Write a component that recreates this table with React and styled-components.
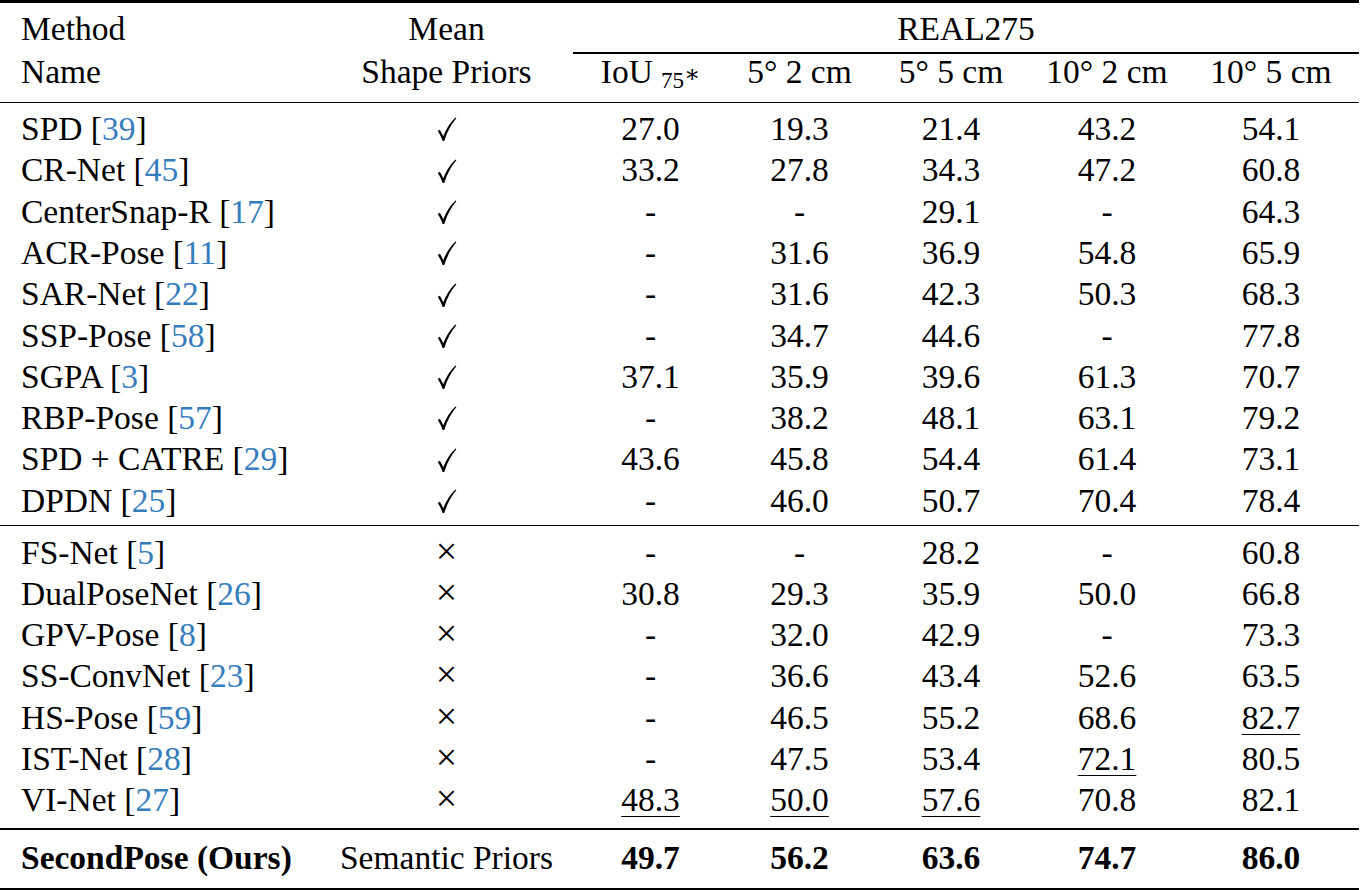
import React from 'react';
import styled, { createGlobalStyle } from 'styled-components';

const GlobalStyle = createGlobalStyle`
  html, body {
    margin: 0;
    padding: 0;
    background: #fff;
  }
  body {
    font-family: 'Liberation Serif', 'Times New Roman', serif;
    color: #000;
  }
`;

const CITE = '#367dbd';

const priorRows = [
  ['SPD', '39', '27.0', '19.3', '21.4', '43.2', '54.1'],
  ['CR-Net', '45', '33.2', '27.8', '34.3', '47.2', '60.8'],
  ['CenterSnap-R', '17', '-', '-', '29.1', '-', '64.3'],
  ['ACR-Pose', '11', '-', '31.6', '36.9', '54.8', '65.9'],
  ['SAR-Net', '22', '-', '31.6', '42.3', '50.3', '68.3'],
  ['SSP-Pose', '58', '-', '34.7', '44.6', '-', '77.8'],
  ['SGPA', '3', '37.1', '35.9', '39.6', '61.3', '70.7'],
  ['RBP-Pose', '57', '-', '38.2', '48.1', '63.1', '79.2'],
  ['SPD + CATRE', '29', '43.6', '45.8', '54.4', '61.4', '73.1'],
  ['DPDN', '25', '-', '46.0', '50.7', '70.4', '78.4'],
];

// a leading "_" marks the second-best (underlined) value
const freeRows = [
  ['FS-Net', '5', '-', '-', '28.2', '-', '60.8'],
  ['DualPoseNet', '26', '30.8', '29.3', '35.9', '50.0', '66.8'],
  ['GPV-Pose', '8', '-', '32.0', '42.9', '-', '73.3'],
  ['SS-ConvNet', '23', '-', '36.6', '43.4', '52.6', '63.5'],
  ['HS-Pose', '59', '-', '46.5', '55.2', '68.6', '_82.7'],
  ['IST-Net', '28', '-', '47.5', '53.4', '_72.1', '80.5'],
  ['VI-Net', '27', '_48.3', '_50.0', '_57.6', '70.8', '82.1'],
];

const metrics = [
  ['5', '2'],
  ['5', '5'],
  ['10', '2'],
  ['10', '5'],
];

const Check = () => (
  <svg width="20" height="25" viewBox="0 0 19 24">
    <path
      d="M0.6 13.4 L2.6 12.2 C3.8 14 4.8 16 5.9 18.4 C8.6 11.4 12.6 5.2 17.6 0.4 L18.5 1.3 C13.8 6.8 9.8 13.8 6.9 23 L5.3 23 C4.1 19.4 2.5 16.2 0.6 13.4 Z"
      fill="#000"
    />
  </svg>
);

const Table = styled.div`
  display: grid;
  grid-template-columns: 320px 253px 155px 143px 160px 152px 176px;
  width: 1359px;
  font-size: 33.5px;
  line-height: 41.3px;
`;

const Rule = styled.div`
  grid-column: ${({ $from }) => $from || 1} / 8;
  height: ${({ $heavy }) => ($heavy ? '3px' : '1.5px')};
  background: #000;
  margin-top: ${({ $above }) => $above || 0}px;
  margin-bottom: ${({ $below }) => $below || 0}px;
`;

const Head = styled.div`
  text-align: ${({ $left }) => ($left ? 'left' : 'center')};
  padding-left: ${({ $left }) => ($left ? '21px' : '0')};
  grid-column: ${({ $span }) => $span || 'auto'};
  white-space: nowrap;
`;

const TopHead = styled(Head)`
  padding-top: 5px;
  padding-bottom: 3px;
`;

const SubHead = styled(Head)`
  margin-top: -3px;
  padding-bottom: 5.5px;
`;

const Cell = styled.div`
  text-align: ${({ $left }) => ($left ? 'left' : 'center')};
  padding-left: ${({ $left }) => ($left ? '21px' : '0')};
  font-weight: ${({ $bold }) => ($bold ? 'bold' : 'normal')};
  white-space: nowrap;
  height: 41.3px;
`;

const MarkCell = styled(Cell)`
  display: flex;
  justify-content: center;
  align-items: flex-end;
  padding-bottom: 7px;
  box-sizing: border-box;
`;

const Cross = styled.span`
  font-size: 38px;
  position: relative;
  top: -1px;
`;

const Cite = styled.span`
  color: ${CITE};
`;

const Under = styled.span`
  text-decoration: underline;
  text-decoration-thickness: 1.4px;
  text-underline-offset: 5px;
`;

const Sub = styled.span`
  font-size: 23px;
  position: relative;
  top: 5px;
  margin-left: 8px;
`;

const Ast = styled.span`
  font-family: 'DejaVu Serif', serif;
  font-size: 24px;
  position: relative;
  top: -1px;
`;

const Value = ({ v }) =>
  v.startsWith('_') ? <Under>{v.slice(1)}</Under> : <>{v}</>;

const DataRow = ({ row, prior }) => {
  const [name, ref, ...vals] = row;
  return (
    <>
      <Cell $left>
        {name} [<Cite>{ref}</Cite>]
      </Cell>
      {prior ? (
        <MarkCell>
          <Check />
        </MarkCell>
      ) : (
        <Cell>
          <Cross>×</Cross>
        </Cell>
      )}
      {vals.map((v, i) => (
        <Cell key={i}>
          <Value v={v} />
        </Cell>
      ))}
    </>
  );
};

export default function App() {
  return (
    <>
      <GlobalStyle />
      <Table>
        <Rule $heavy />
        <TopHead $left>Method</TopHead>
        <TopHead>Mean</TopHead>
        <TopHead $span="3 / 8">REAL275</TopHead>
        <Rule $from={3} />
        <SubHead $left>Name</SubHead>
        <SubHead>Shape Priors</SubHead>
        <SubHead>
          IoU<Sub>75</Sub>
          <Ast>∗</Ast>
        </SubHead>
        {metrics.map(([deg, cm]) => (
          <SubHead key={deg + cm}>
            {deg}° {cm} cm
          </SubHead>
        ))}
        <Rule $below={5} />

        {priorRows.map((row) => (
          <DataRow key={row[0]} row={row} prior />
        ))}
        <Rule $above={3.5} $below={5.5} />

        {freeRows.map((row) => (
          <DataRow key={row[0]} row={row} />
        ))}
        <Rule $above={7.5} $below={7} />

        <Cell $left $bold>
          SecondPose (Ours)
        </Cell>
        <Cell>Semantic Priors</Cell>
        {['49.7', '56.2', '63.6', '74.7', '86.0'].map((v) => (
          <Cell key={v} $bold>
            {v}
          </Cell>
        ))}
        <Rule $heavy $above={10} />
      </Table>
    </>
  );
}
